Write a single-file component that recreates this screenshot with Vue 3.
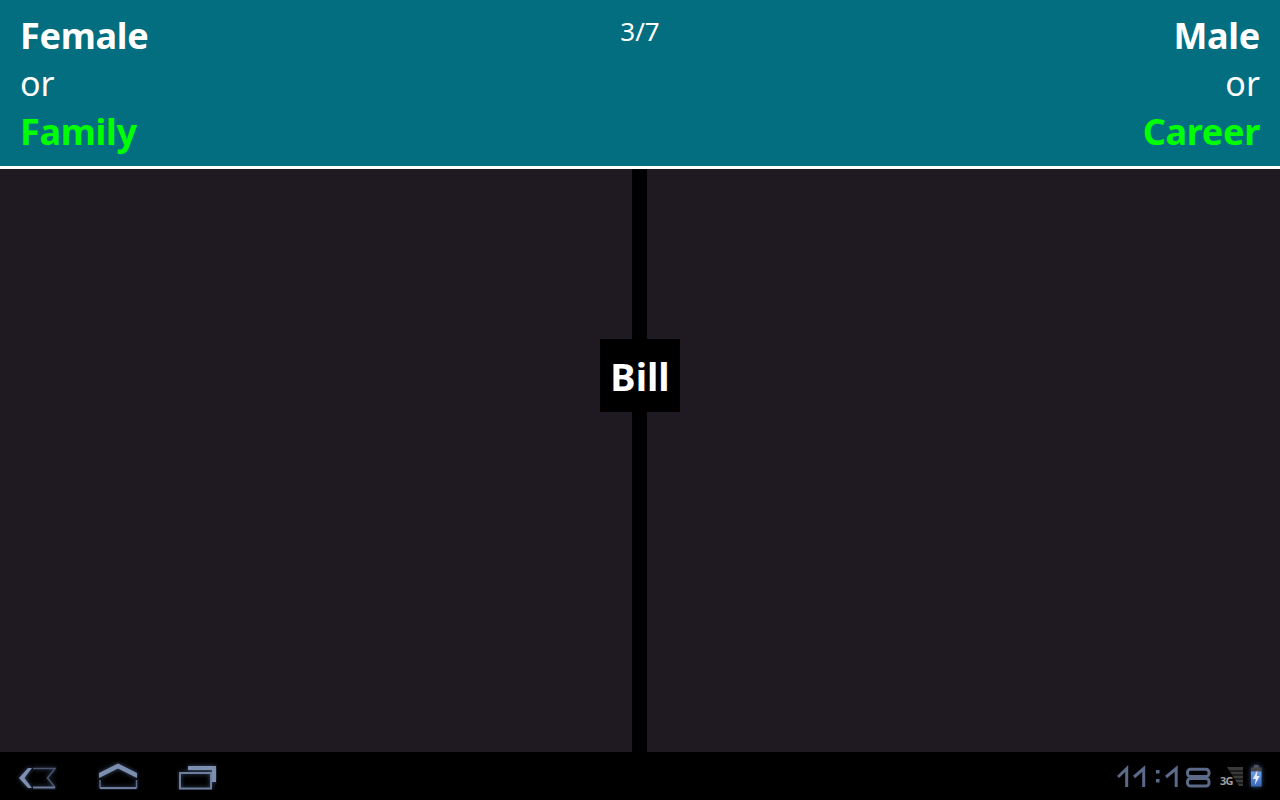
<template>
  <div class="screen">
    <header class="top">
      <div class="side">
        <div class="cat">Female</div>
        <div class="or">or</div>
        <div class="cat green">Family</div>
      </div>
      <div class="count">{{ current }}/{{ total }}</div>
      <div class="side right">
        <div class="cat">Male</div>
        <div class="or">or</div>
        <div class="cat green">Career</div>
      </div>
    </header>

    <main class="board">
      <div class="pane left-pane"></div>
      <div class="divider"></div>
      <div class="pane"></div>
      <div class="word">{{ word }}</div>
    </main>

    <footer class="nav">
      <div class="nav-buttons">
        <svg class="ic" width="40" height="28" viewBox="0 0 40 28">
          <g class="glow">
            <path d="M11 6 L2 16 L11 26 H15 L7.5 16 L15 6 Z" fill="#7d8fb0" />
            <path d="M16 6.5 H38 L30.5 16 L38 25.5" fill="none" stroke="#48566f" stroke-width="1.5" />
            <path d="M16 25.5 H38" fill="none" stroke="#6d7d9b" stroke-width="2" />
          </g>
        </svg>
        <svg class="ic home" width="42" height="28" viewBox="0 0 42 28">
          <g class="glow">
            <path d="M2 11 L21 1.5 L40 11 V16 L21 6.5 L2 16 Z" fill="#7d8fb0" />
            <path d="M3 18 V26 M39.5 18 V26" fill="none" stroke="#5a6a88" stroke-width="1.5" />
            <path d="M3 26 H39.5" fill="none" stroke="#6d7d9b" stroke-width="2" />
          </g>
        </svg>
        <svg class="ic" width="40" height="28" viewBox="0 0 40 28">
          <g class="glow">
            <path d="M11 4 H39 V20 H35 V8 H11 Z" fill="#7d8fb0" />
            <rect x="3" y="11" width="31" height="15.5" fill="none" stroke="#6d7d9b" stroke-width="2" />
          </g>
        </svg>
      </div>
      <div class="status">
        <svg class="clock" width="94" height="24" viewBox="0 0 94 24">
          <g fill="none" stroke="#5a6a88" stroke-width="3">
            <path d="M1 13 L9.7 4.5 V23" />
            <path d="M17 13 L26.7 4.5 V23" />
            <path d="M49 13 L59.2 4.5 V23" />
            <rect x="70.5" y="5.2" width="21.5" height="7.3" rx="3" />
            <rect x="70.5" y="14.5" width="21.5" height="7.5" rx="3" />
          </g>
          <rect x="39" y="6" width="3.5" height="3.5" fill="#5a6a88" />
          <rect x="39" y="15" width="3.5" height="3.5" fill="#5a6a88" />
        </svg>
        <div class="signal">
          <span class="g3">3G</span>
          <svg class="bars" width="16" height="20" viewBox="0 0 16 20">
            <path d="M0 1 H16 V20 H12 Z" fill="#3a3a3a" />
            <path d="M0 5 H16 M3 9 H16 M6 13 H16 M9 17 H16" stroke="#000" stroke-width="1" />
          </svg>
        </div>
        <svg class="battery" width="14" height="24" viewBox="0 0 14 24">
          <defs>
            <linearGradient id="charge" x1="0" y1="0" x2="0" y2="1">
              <stop offset="0" stop-color="#6c9fe6" />
              <stop offset="1" stop-color="#3a64b4" />
            </linearGradient>
          </defs>
          <rect x="5" y="1" width="4.5" height="3" fill="#555" />
          <rect x="2" y="3.5" width="10.5" height="4" fill="#444" />
          <rect x="2" y="7.5" width="10.5" height="15" fill="url(#charge)" />
          <path d="M8.5 6 L3.8 15 H6.8 L5.8 21 L10.8 12 H7.8 Z" fill="#e4ecfa" />
        </svg>
      </div>
    </footer>
  </div>
</template>

<script setup>
const current = 3
const total = 7
const word = 'Bill'
</script>

<style scoped>
.screen {
  width: 1280px;
  height: 800px;
  display: flex;
  flex-direction: column;
  background: #000;
  font-family: "Noto Sans", "Open Sans", sans-serif;
  overflow: hidden;
}

.top {
  height: 166px;
  box-sizing: content-box;
  border-bottom: 3px solid #fff;
  background: #026e80;
  color: #fff;
  display: flex;
  justify-content: space-between;
  padding: 0 20px;
  flex-shrink: 0;
}

.side {
  padding-top: 12px;
  width: 300px;
}

.side.right {
  text-align: right;
}

.cat {
  font-size: 36px;
  line-height: 48px;
  font-weight: 700;
  letter-spacing: -0.3px;
}

.or {
  font-size: 34px;
  line-height: 46px;
  margin-bottom: 2px;
}

.green {
  color: #00ff00;
}

.count {
  font-size: 26px;
  line-height: 36px;
  padding-top: 13px;
}

.board {
  flex: 1;
  display: flex;
  position: relative;
  background: #1f1a21;
}

.left-pane {
  width: 632px;
  flex-shrink: 0;
}

.divider {
  width: 15px;
  background: #000;
}

.pane:last-of-type {
  flex: 1;
}

.word {
  position: absolute;
  left: 600px;
  top: 170px;
  width: 80px;
  height: 73px;
  background: #000;
  color: #fff;
  font-size: 38px;
  font-weight: 700;
  display: flex;
  align-items: center;
  justify-content: center;
}

.nav {
  height: 48px;
  background: #000;
  display: flex;
  justify-content: space-between;
  align-items: center;
  flex-shrink: 0;
}

.nav-buttons {
  display: flex;
  gap: 40px;
  padding-left: 17px;
}

.home {
  margin-right: -2px;
}

.glow {
  filter: drop-shadow(0 0 2px rgba(110, 135, 190, 0.6));
}

.status {
  display: flex;
  align-items: center;
  padding-right: 17px;
}

.clock {
  margin-right: 8px;
}

.signal {
  width: 24px;
  height: 20px;
  margin-right: 6px;
  display: flex;
  align-items: flex-end;
  justify-content: space-between;
}

.g3 {
  width: 8px;
  padding-left: 1px;
  box-sizing: border-box;
  color: #a0a0a0;
  font-size: 11px;
  font-weight: 700;
  line-height: 10px;
  letter-spacing: -0.8px;
  white-space: nowrap;
}

.battery {
  filter: drop-shadow(0 0 2px rgba(80, 130, 220, 0.7));
}
</style>

<style>
body {
  background: #000;
}
</style>
